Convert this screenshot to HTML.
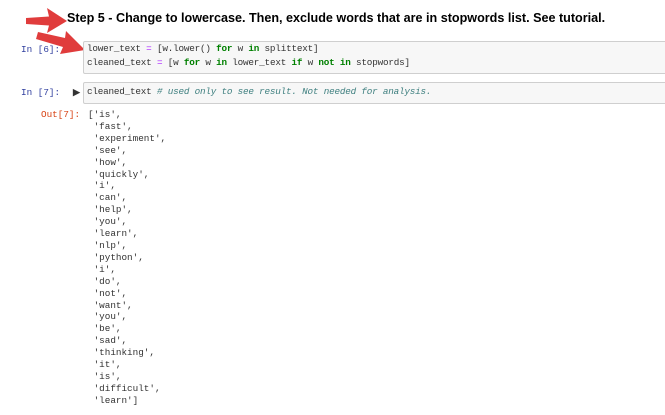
<!DOCTYPE html>
<html><head><style>
body{margin:0;width:665px;height:415px;background:#fff;position:relative;overflow:hidden;font-family:"Liberation Mono",monospace;}
.h{position:absolute;left:67px;top:11px;font:bold 12.6px "Liberation Sans",sans-serif;color:#000;white-space:nowrap;}
.p{position:absolute;font-size:9.3px;color:#303f9f;white-space:nowrap;}
.box{position:absolute;left:83px;right:-2px;background:#f7f7f7;border:1px solid #cfcfcf;border-radius:2px;}
.c{position:absolute;left:87px;font-size:9.3px;letter-spacing:-0.2px;line-height:14px;color:#333;white-space:pre;}
.k{color:#008000;font-weight:bold}.o{color:#aa22ff}.cm{color:#408080;font-style:italic}
.out{position:absolute;left:88px;top:109px;font-size:9.3px;line-height:11.9px;color:#333;white-space:pre;}
</style></head><body>
<svg style="position:absolute;left:0;top:0" width="100" height="60">
<path d="M26 18 L49 16.5 L47 8 L67 21 L47 33 L49 25.5 L26 24 Z" fill="#e03c3c"/>
<path d="M38 32 L65 38 L66 31 L85 50 L60 54 L63 47 L36 39 Z" fill="#e03c3c"/>
</svg>
<div class="h">Step 5 - Change to lowercase. Then, exclude words that are in stopwords list. See tutorial.</div>
<div class="p" style="left:21px;top:44px">In [6]:</div>
<div class="box" style="top:41px;height:31px"></div>
<div class="c" style="top:42px">lower_text <span class="o">=</span> [w.lower() <span class="k">for</span> w <span class="k">in</span> splittext]
cleaned_text <span class="o">=</span> [w <span class="k">for</span> w <span class="k">in</span> lower_text <span class="k">if</span> w <span class="k">not</span> <span class="k">in</span> stopwords]</div>
<div class="p" style="left:21px;top:87px">In [7]:</div>
<div style="position:absolute;left:73px;top:87px;font:bold 9px 'Liberation Sans',sans-serif;color:#333">&#9654;</div>
<div class="box" style="top:82px;height:20px"></div>
<div class="c" style="top:85px">cleaned_text <span class="cm"># used only to see result. Not needed for analysis.</span></div>
<div class="p" style="left:41px;top:109px;color:#d84315">Out[7]:</div>
<div class="out">['is',
 'fast',
 'experiment',
 'see',
 'how',
 'quickly',
 'i',
 'can',
 'help',
 'you',
 'learn',
 'nlp',
 'python',
 'i',
 'do',
 'not',
 'want',
 'you',
 'be',
 'sad',
 'thinking',
 'it',
 'is',
 'difficult',
 'learn']</div>
</body></html>
